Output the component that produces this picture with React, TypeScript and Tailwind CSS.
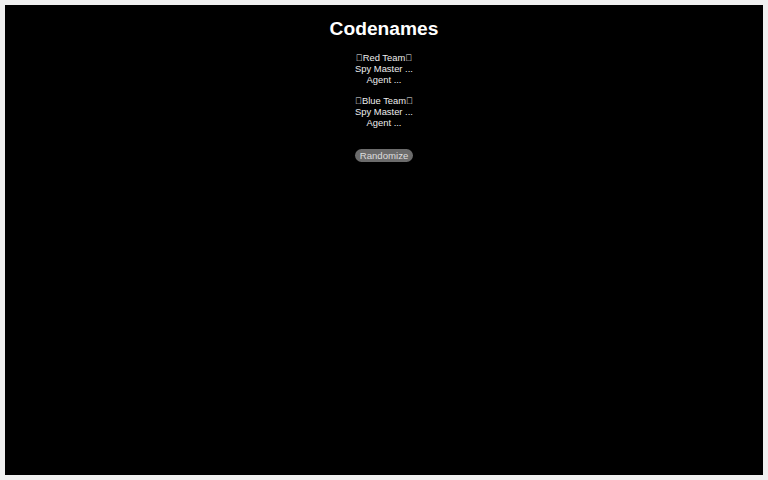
import React from 'react';

const teams = [
  { name: 'Red Team' },
  { name: 'Blue Team' },
];

export default function App() {
  return (
    <div className="h-[480px] w-[768px] bg-[#f0f0f0] p-[5px] font-['Liberation_Sans',Arial,sans-serif]">
      <div className="flex h-full flex-col items-center bg-black pt-[13px] text-white">
        <h1 className="text-[19.2px] font-bold leading-[22px]">Codenames</h1>
        <div className="mt-[12px] flex flex-col items-center gap-[10px] text-[9.4px] leading-[11px] text-[#eeeeee]">
          {teams.map(team => (
            <div key={team.name} className="flex flex-col items-center">
              <span>{'\uE000'}{team.name}{'\uE000'}</span>
              <span>Spy Master ...</span>
              <span>Agent ...</span>
            </div>
          ))}
        </div>
        <button
          type="button"
          className="mt-[21px] h-[13px] rounded-full bg-[#6b6b6b] px-[5px] text-[9.6px] leading-[13px] text-[#dddddd]"
        >
          Randomize
        </button>
      </div>
    </div>
  );
}
